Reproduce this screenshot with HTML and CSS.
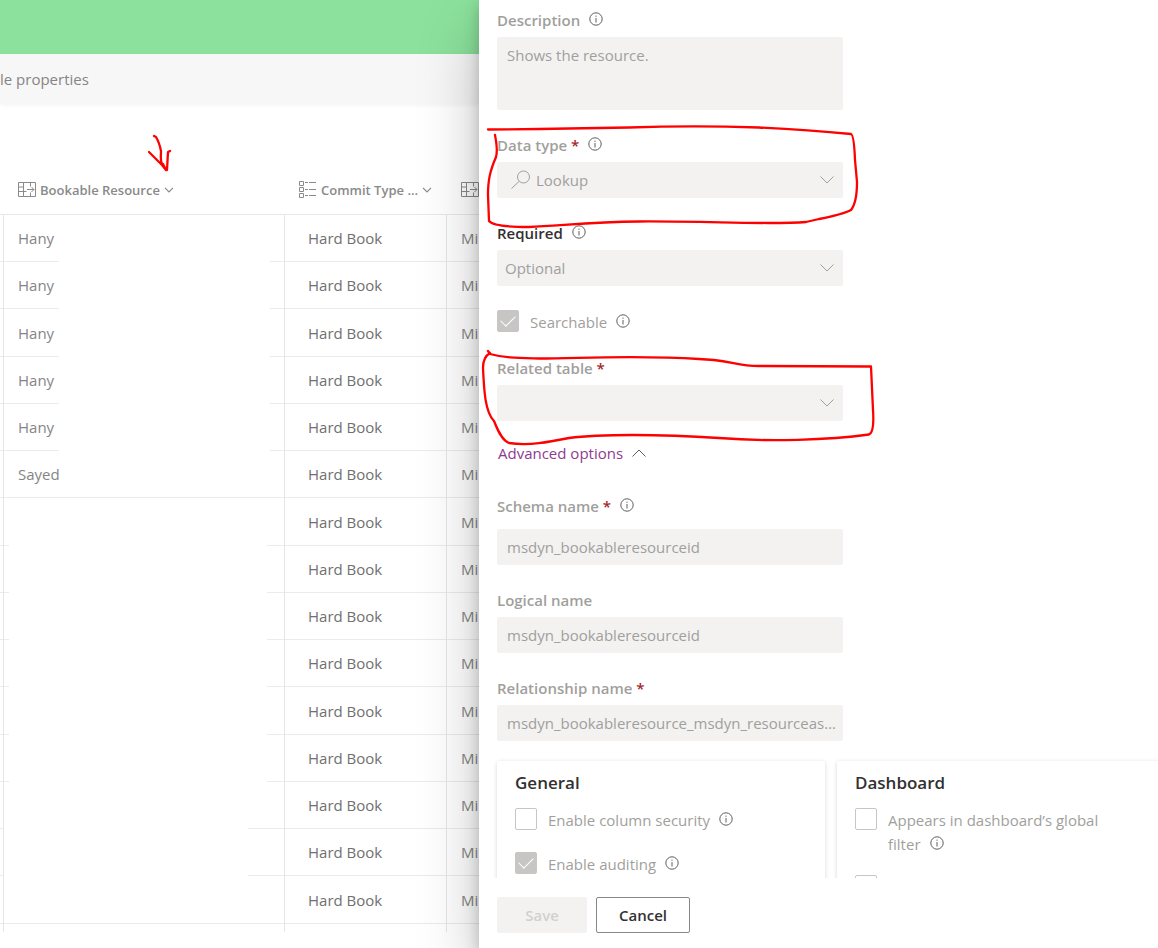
FILE: index.html
```
<!DOCTYPE html>
<html lang="en">
<head>
  <meta charset="UTF-8">
  <meta name="viewport" content="width=device-width, initial-scale=1.0">
  <title>Edit column</title>
  <link rel="stylesheet" href="styles.css">
</head>
<body>
  <svg class="sprite" aria-hidden="true">
    <symbol id="info" viewBox="0 0 14 14">
      <circle cx="7" cy="7" r="6.2" fill="none" stroke="currentColor"/>
      <path d="M7 6v4.5M7 3.6v1.2" fill="none" stroke="currentColor"/>
    </symbol>
    <symbol id="chevron" viewBox="0 0 14 8">
      <path d="M.5 .5L7 7L13.5 .5" fill="none" stroke="currentColor"/>
    </symbol>
    <symbol id="sort" viewBox="0 0 10 6">
      <path d="M1 .8L5 4.8L9 .8" fill="none" stroke="currentColor" stroke-width="1.2"/>
    </symbol>
    <symbol id="lookup" viewBox="0 0 18 15">
      <path d="M.5 .5h17v14h-17zM.5 5h5M.5 9.5h5M5.5 .5v14M12.5 .5v4M12.5 10.5v4M5.5 9.5h3M12.5 .5v3M9 7.5h7M13.5 5l2.5 2.5l-2.5 2.5" fill="none" stroke="currentColor"/>
    </symbol>
    <symbol id="choice" viewBox="0 0 18 17">
      <path d="M.5 .5h4v4h-4zM.5 6.5h4v4h-4zM.5 12.5h4v4h-4zM6 1.5h3M10 1.5h7M6 8.5h3M10 8.5h7M6 14.5h3M10 14.5h7" fill="none" stroke="currentColor"/>
    </symbol>
  </svg>

  <main class="workspace">
    <div class="banner"></div>
    <nav class="command-bar"><a href="#">le properties</a></nav>
    <div class="grid-area">
      <table class="rows">
        <colgroup>
          <col class="col-edge">
          <col class="col-resource">
          <col class="col-commit">
          <col class="col-more">
        </colgroup>
        <thead>
          <tr>
            <th></th>
            <th><span class="head"><svg class="type-icon"><use href="#lookup"/></svg>Bookable Resource<svg class="sort"><use href="#sort"/></svg></span></th>
            <th><span class="head"><svg class="type-icon"><use href="#choice"/></svg>Commit Type ...<svg class="sort"><use href="#sort"/></svg></span></th>
            <th><span class="head"><svg class="type-icon"><use href="#lookup"/></svg></span></th>
          </tr>
        </thead>
        <tbody>
          <tr><td></td><td class="cut">Hany</td><td>Hard Book</td><td>Mi</td></tr>
          <tr><td></td><td class="cut">Hany</td><td>Hard Book</td><td>Mi</td></tr>
          <tr><td></td><td class="cut">Hany</td><td>Hard Book</td><td>Mi</td></tr>
          <tr><td></td><td class="cut">Hany</td><td>Hard Book</td><td>Mi</td></tr>
          <tr><td></td><td class="cut">Hany</td><td>Hard Book</td><td>Mi</td></tr>
          <tr><td></td><td>Sayed</td><td>Hard Book</td><td>Mi</td></tr>
          <tr><td></td><td class="cut empty"></td><td>Hard Book</td><td>Mi</td></tr>
          <tr><td></td><td class="cut empty"></td><td>Hard Book</td><td>Mi</td></tr>
          <tr><td></td><td class="cut empty"></td><td>Hard Book</td><td>Mi</td></tr>
          <tr><td></td><td class="cut empty"></td><td>Hard Book</td><td>Mi</td></tr>
          <tr><td></td><td class="cut empty"></td><td>Hard Book</td><td>Mi</td></tr>
          <tr><td></td><td class="cut empty"></td><td>Hard Book</td><td>Mi</td></tr>
          <tr><td></td><td class="cut empty wide"></td><td>Hard Book</td><td>Mi</td></tr>
          <tr><td></td><td class="cut empty wide"></td><td>Hard Book</td><td>Mi</td></tr>
          <tr><td></td><td></td><td>Hard Book</td><td>Mi</td></tr>
          <tr class="tail"><td></td><td></td><td></td><td></td></tr>
        </tbody>
      </table>
    </div>
    <svg class="ink ink-arrow" viewBox="0 0 30 40" aria-hidden="true">
      <path d="M6 2l2 1c3 5 4 9 5 14c0 5-1 9 1 13M1 18l13 13l4 5M22 17l-2 1l-1 18l-5-5M15 30l3 6"/>
    </svg>
  </main>

  <aside class="panel">
    <div class="panel-body">
      <form class="fields">
        <div class="field">
          <div class="label-row"><label for="description">Description</label><svg class="info"><use href="#info"/></svg></div>
          <textarea id="description" disabled>Shows the resource.</textarea>
        </div>
        <div class="field">
          <div class="label-row"><label for="datatype">Data type <b>*</b></label><svg class="info"><use href="#info"/></svg></div>
          <div class="select with-icon">
            <select id="datatype" disabled><option>Lookup</option></select>
            <svg class="search" viewBox="0 0 20 20"><circle cx="12.5" cy="7" r="6" fill="none" stroke="currentColor"/><path d="M8 11.5L.5 18.5" fill="none" stroke="currentColor"/></svg>
            <svg class="arrow"><use href="#chevron"/></svg>
          </div>
        </div>
        <div class="field">
          <div class="label-row strong"><label for="required">Required</label><svg class="info"><use href="#info"/></svg></div>
          <div class="select">
            <select id="required" disabled><option>Optional</option></select>
            <svg class="arrow"><use href="#chevron"/></svg>
          </div>
        </div>
        <div class="check">
          <input type="checkbox" id="searchable" checked disabled>
          <div><label for="searchable">Searchable</label><svg class="info"><use href="#info"/></svg></div>
        </div>
        <div class="field">
          <div class="label-row"><label for="related">Related table <b>*</b></label></div>
          <div class="select">
            <select id="related" disabled><option></option></select>
            <svg class="arrow"><use href="#chevron"/></svg>
          </div>
        </div>
        <button type="button" class="advanced">Advanced options<svg><use href="#chevron"/></svg></button>
        <div class="field">
          <div class="label-row tall"><label for="schema">Schema name <b>*</b></label><svg class="info"><use href="#info"/></svg></div>
          <input type="text" id="schema" value="msdyn_bookableresourceid" disabled>
        </div>
        <div class="field">
          <div class="label-row"><label for="logical">Logical name</label></div>
          <input type="text" id="logical" value="msdyn_bookableresourceid" disabled>
        </div>
        <div class="field">
          <div class="label-row"><label for="relationship">Relationship name <b>*</b></label></div>
          <input type="text" id="relationship" value="msdyn_bookableresource_msdyn_resourceassignment" disabled>
        </div>
      </form>
      <div class="cards">
        <section class="card">
          <h2>General</h2>
          <div class="check">
            <input type="checkbox" id="security" disabled>
            <div><label for="security">Enable column security</label><svg class="info"><use href="#info"/></svg></div>
          </div>
          <div class="check">
            <input type="checkbox" id="auditing" checked disabled>
            <div><label for="auditing">Enable auditing</label><svg class="info"><use href="#info"/></svg></div>
          </div>
        </section>
        <section class="card">
          <h2>Dashboard</h2>
          <div class="check">
            <input type="checkbox" id="global-filter" disabled>
            <div><label for="global-filter">Appears in dashboard’s global filter</label><svg class="info"><use href="#info"/></svg></div>
          </div>
          <div class="check">
            <input type="checkbox" aria-label="Sortable" disabled>
          </div>
        </section>
      </div>
    </div>
    <footer class="actions">
      <button type="button" class="save" disabled>Save</button>
      <button type="button" class="cancel">Cancel</button>
    </footer>
    <svg class="ink ink-boxes" viewBox="0 0 400 460" aria-hidden="true">
      <path d="M9 129.500L60 129L150 127.500C190 126 240 126 280 127.500C310 129 340 131 372 134Q375 135 376 160L378 182C378 195 376 205 372 210C365 214 355 216 340 219L327 222C290 225 230 221 160 221.500C110 222 80 226 50 227C30 227 14 226 10 221L9 195C9 180 11 171 17 157Q19 150 16 135"/>
      <path d="M9 351L11 354C25 358 40 358 60 358.500C110 358 160 355 220 359L235 360C255 362 260 366 280 366L392 366.500L394 410C395 425 394 433 390 434.500C350 440 290 442 240 438C180 434 120 434 90 438C70 442 50 446 30 443C22 440 18 428 15 421C6 412 5 390 4 368Q4 357 11 353"/>
    </svg>
  </aside>
</body>
</html>
```
FILE: styles.css
```
* {
  box-sizing: border-box;
}
body {
  margin: 0;
  display: flex;
  height: 100vh;
  overflow: hidden;
  background: #fff;
  color: #323130;
  font-family: "Open Sans", "Noto Sans", sans-serif;
  font-size: 15px;
  line-height: 24px;
}
input, textarea, select, button {
  font: inherit;
  color: inherit;
}
.sprite {
  display: none;
}

/* table behind the panel */
.workspace {
  position: relative;
  flex: 1;
  min-width: 0;
  overflow: hidden;
}
.banner {
  height: 54px;
  background: #8ce29c;
}
.command-bar {
  display: flex;
  align-items: center;
  height: 50px;
  background: #f7f7f7;
  box-shadow: 0 1px 4px rgba(0, 0, 0, 0.05);
}
.command-bar a {
  color: #858585;
  text-decoration: none;
  white-space: nowrap;
}
.grid-area {
  padding-top: 61px;
}
.rows {
  table-layout: fixed;
  width: 600px;
  border-collapse: separate;
  border-spacing: 0;
}
.col-edge {
  width: 4px;
}
.col-resource {
  width: 281px;
}
.col-commit {
  width: 162px;
}
.rows th {
  height: 50px;
  padding: 0 14px;
  border-bottom: 1px solid #e9e9e9;
  color: #8a8a8a;
  font-size: 13px;
  font-weight: 600;
  text-align: left;
}
.rows th:first-child, .rows td:first-child {
  padding: 0;
}
.head {
  display: flex;
  align-items: center;
  gap: 4px;
  white-space: nowrap;
}
.type-icon {
  flex: none;
  width: 18px;
  height: 17px;
}
.sort {
  width: 10px;
  height: 6px;
}
.rows td {
  height: 47px;
  padding: 0 14px;
  border-right: 1px solid #e6e6e6;
  border-bottom: 1px solid #ebebeb;
  color: #858585;
}
.rows tr:nth-child(4n+3) td {
  height: 48px;
}
.rows td:nth-child(3) {
  padding-left: 23px;
  color: #707070;
}
.rows .cut {
  border-bottom-color: transparent;
  background:
    linear-gradient(#ebebeb, #ebebeb) left bottom / 55px 1px no-repeat,
    linear-gradient(#ebebeb, #ebebeb) right bottom / 15px 1px no-repeat;
  background-origin: border-box;
}
.rows .empty {
  background-size: 5px 1px, 18px 1px;
}
.rows .wide {
  background-size: 0 1px, 37px 1px;
}
.rows .tail td {
  height: 8px;
  border-bottom: 0;
}

/* column editor */
.panel {
  position: relative;
  display: flex;
  flex-direction: column;
  width: 679px;
  max-width: 100%;
  background: #fff;
  box-shadow: 0 26px 58px rgba(0, 0, 0, 0.24), 0 5px 14px rgba(0, 0, 0, 0.2);
}
.panel-body {
  flex: 1;
  min-height: 0;
  padding: 9px 0 0 18px;
  overflow: hidden;
}
.fields {
  display: flex;
  flex-direction: column;
  gap: 24px;
  width: 346px;
}
.field {
  display: flex;
  flex-direction: column;
}
.label-row {
  display: flex;
  height: 28px;
  color: #a19f9d;
  font-weight: 600;
  line-height: 22px;
}
.label-row b {
  color: #a4262c;
  font-weight: 600;
}
.label-row.strong {
  color: #323130;
}
.label-row.tall {
  height: 44px;
  padding-top: 10px;
}
.info {
  flex: none;
  width: 14px;
  height: 14px;
  margin: 3px 0 0 9px;
  color: #605e5c;
}
.field textarea, .field input, .field select {
  display: block;
  width: 100%;
  height: 36px;
  padding: 0 4px 0 10px;
  border: 0;
  border-radius: 2px;
  background: #f3f2f1;
  color: #a19f9d;
  opacity: 1;
  appearance: none;
  text-overflow: ellipsis;
}
.field textarea {
  height: 73px;
  padding-top: 6px;
  resize: none;
}
.select {
  position: relative;
  color: #a19f9d;
}
.field select {
  padding: 0 32px 0 8px;
}
.field .with-icon select {
  padding-left: 39px;
}
.search {
  position: absolute;
  left: 14px;
  top: 8px;
  width: 20px;
  height: 20px;
}
.arrow {
  position: absolute;
  right: 9px;
  top: 14px;
  width: 14px;
  height: 8px;
}
.check {
  display: flex;
  align-items: flex-start;
  gap: 11px;
  height: 23px;
  color: #a19f9d;
}
.check div {
  flex: 1;
  max-width: 220px;
}
.check .info {
  margin-top: 0;
}
.check input {
  display: grid;
  place-items: center;
  flex: none;
  width: 22px;
  height: 22px;
  margin: 0;
  border: 1px solid #c8c6c4;
  border-radius: 2px;
  background: #fff;
  appearance: none;
}
.check input:checked {
  padding-bottom: 4px;
  background: #c8c6c4;
}
.check input:checked::after {
  content: "";
  width: 13px;
  height: 7px;
  border: solid #fff;
  border-width: 0 0 1px 1px;
  transform: rotate(-45deg);
}
.advanced {
  display: flex;
  align-items: center;
  gap: 9px;
  height: 16px;
  padding: 0 0 0 1px;
  border: 0;
  background: none;
  color: #8f3a91;
  line-height: 16px;
  white-space: nowrap;
}
.advanced svg {
  width: 14px;
  height: 8px;
  color: #605e5c;
  transform: rotate(180deg);
}
.cards {
  display: grid;
  grid-template-columns: 328px 328px;
  gap: 12px;
  margin-top: 20px;
}
.card {
  min-height: 160px;
  padding: 10px 18px;
  border-radius: 2px;
  box-shadow: 0 1px 4px rgba(0, 0, 0, 0.16);
}
.card h2 {
  margin: 0 0 13px;
  font-size: 17px;
  font-weight: 600;
  line-height: 24px;
}
.card .check {
  margin-bottom: 21px;
}
.card:last-child .check {
  height: 46px;
}
.actions {
  display: flex;
  gap: 9px;
  height: 70px;
  padding: 19px 18px 15px;
}
.actions button {
  width: 94px;
  border: 1px solid #8a8886;
  border-radius: 2px;
  background: #fff;
  font-weight: 600;
}
.actions .save {
  width: 90px;
  border: 0;
  background: #f3f2f1;
  color: #d2d0ce;
}

/* pen marks */
.ink {
  position: absolute;
  fill: none;
  stroke: #fe0000;
  stroke-width: 2.3;
  stroke-linecap: round;
  stroke-linejoin: round;
  pointer-events: none;
}
.ink-arrow {
  left: 148px;
  top: 134px;
  width: 30px;
  height: 40px;
}
.ink-boxes {
  left: 0;
  top: 0;
  width: 400px;
  height: 460px;
}
```
